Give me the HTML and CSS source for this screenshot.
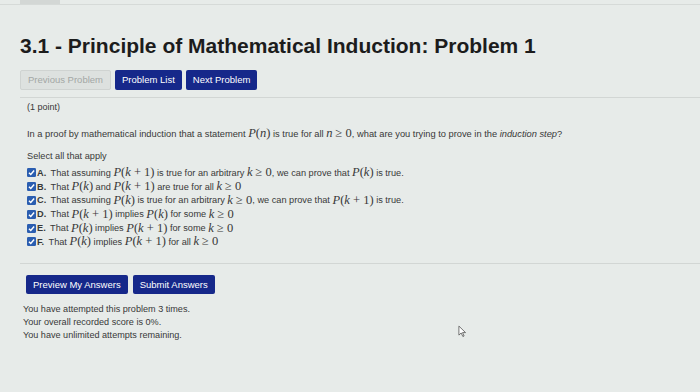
FILE: index.html
```html
<!DOCTYPE html>
<html>
<head>
<meta charset="utf-8">
<link rel="stylesheet" href="styles.css">
</head>
<body>
<div class="topbar"><span class="topbox"></span></div>
<main class="page">
  <h1 class="title">3.1 - Principle of Mathematical Induction: Problem 1</h1>
  <nav class="nav">
    <span class="btn btn-disabled">Previous Problem</span>
    <span class="btn">Problem List</span>
    <span class="btn">Next Problem</span>
  </nav>
  <section class="problem">
    <p class="points">(1 point)</p>
    <p class="question">In a proof by mathematical induction that a statement <span class="m"><i>P</i>(<i>n</i>)</span> is true for all <span class="m"><i>n</i> ≥ 0</span>, what are you trying to prove in the <em>induction step</em>?</p>
    <p class="select">Select all that apply</p>
    <ul class="options">
      <li><span class="cb"><svg viewBox="0 0 10 10"><rect width="10" height="10" rx="1.5" fill="#2a5db0"/><path d="M2.2 5.2 L4.2 7.2 L7.9 2.8" stroke="#fff" stroke-width="1.6" fill="none"/></svg></span><b>A.</b> That assuming <span class="m"><i>P</i>(<i>k</i> + 1)</span> is true for an arbitrary <span class="m"><i>k</i> ≥ 0</span>, we can prove that <span class="m"><i>P</i>(<i>k</i>)</span> is true.</li>
      <li><span class="cb"><svg viewBox="0 0 10 10"><rect width="10" height="10" rx="1.5" fill="#2a5db0"/><path d="M2.2 5.2 L4.2 7.2 L7.9 2.8" stroke="#fff" stroke-width="1.6" fill="none"/></svg></span><b>B.</b> That <span class="m"><i>P</i>(<i>k</i>)</span> and <span class="m"><i>P</i>(<i>k</i> + 1)</span> are true for all <span class="m"><i>k</i> ≥ 0</span></li>
      <li><span class="cb"><svg viewBox="0 0 10 10"><rect width="10" height="10" rx="1.5" fill="#2a5db0"/><path d="M2.2 5.2 L4.2 7.2 L7.9 2.8" stroke="#fff" stroke-width="1.6" fill="none"/></svg></span><b>C.</b> That assuming <span class="m"><i>P</i>(<i>k</i>)</span> is true for an arbitrary <span class="m"><i>k</i> ≥ 0</span>, we can prove that <span class="m"><i>P</i>(<i>k</i> + 1)</span> is true.</li>
      <li><span class="cb"><svg viewBox="0 0 10 10"><rect width="10" height="10" rx="1.5" fill="#2a5db0"/><path d="M2.2 5.2 L4.2 7.2 L7.9 2.8" stroke="#fff" stroke-width="1.6" fill="none"/></svg></span><b>D.</b> That <span class="m"><i>P</i>(<i>k</i> + 1)</span> implies <span class="m"><i>P</i>(<i>k</i>)</span> for some <span class="m"><i>k</i> ≥ 0</span></li>
      <li><span class="cb"><svg viewBox="0 0 10 10"><rect width="10" height="10" rx="1.5" fill="#2a5db0"/><path d="M2.2 5.2 L4.2 7.2 L7.9 2.8" stroke="#fff" stroke-width="1.6" fill="none"/></svg></span><b>E.</b> That <span class="m"><i>P</i>(<i>k</i>)</span> implies <span class="m"><i>P</i>(<i>k</i> + 1)</span> for some <span class="m"><i>k</i> ≥ 0</span></li>
      <li><span class="cb"><svg viewBox="0 0 10 10"><rect width="10" height="10" rx="1.5" fill="#2a5db0"/><path d="M2.2 5.2 L4.2 7.2 L7.9 2.8" stroke="#fff" stroke-width="1.6" fill="none"/></svg></span><b>F.</b> That <span class="m"><i>P</i>(<i>k</i>)</span> implies <span class="m"><i>P</i>(<i>k</i> + 1)</span> for all <span class="m"><i>k</i> ≥ 0</span></li>
    </ul>
  </section>
  <div class="submit-row">
    <span class="btn">Preview My Answers</span>
    <span class="btn">Submit Answers</span>
  </div>
  <div class="status">
    <p>You have attempted this problem 3 times.</p>
    <p>Your overall recorded score is 0%.</p>
    <p>You have unlimited attempts remaining.</p>
  </div>
  <svg class="cursor" viewBox="0 0 10 14" width="9" height="13"><path d="M1 1 L1 11 L3.5 8.6 L5.4 12.6 L6.8 12 L5 8.2 L8.4 8.2 Z" fill="#fff" stroke="#555" stroke-width="0.9"/></svg>
</main>
</body>
</html>
```
FILE: styles.css
```css
html, body {
  margin: 0;
  padding: 0;
}
body {
  width: 700px;
  height: 392px;
  overflow: hidden;
  background: #e7ebe9;
  font-family: "Liberation Sans", Arial, sans-serif;
  color: #383838;
}
.topbar {
  height: 4px;
  border-bottom: 1px solid #d6dad8;
}
.topbox {
  display: block;
  width: 40px;
  height: 4px;
  margin-left: 20px;
  background: #d3d7d5;
}
.page {
  position: relative;
  padding-left: 20px;
  height: 387px;
}
.title {
  margin: 0;
  padding-top: 27px;
  font-size: 21px;
  font-weight: bold;
  color: #1c1c1c;
  line-height: 28px;
}
.nav {
  display: flex;
  gap: 4px;
  margin-top: 10px;
}
.btn {
  display: inline-block;
  background: #16288a;
  color: #fff;
  font-size: 9.5px;
  line-height: 20px;
  padding: 0 7px;
  border-radius: 2px;
}
.nav .btn {
  padding: 0 7px;
}
.btn-disabled {
  background: #dde1df;
  color: #a3a7a5;
  border: 1px solid #cfd3d1;
  line-height: 18px;
}
.problem {
  border-top: 1px solid #d2d6d4;
  margin-top: 7px;
  padding-left: 7px;
  padding-bottom: 14px;
  border-bottom: 1px solid #d2d6d4;
}
.problem p {
  margin: 0;
}
.points {
  font-size: 9px;
  padding-top: 3px;
  line-height: 12px;
}
.question {
  font-size: 9.3px;
  margin-top: 13px !important;
  line-height: 14px;
}
.m {
  font-family: "Liberation Serif", "Times New Roman", serif;
  font-size: 12.5px;
}
.m i {
  font-style: italic;
}
em {
  font-style: italic;
}
.select {
  font-size: 9.2px;
  margin-top: 9px !important;
  line-height: 13px;
}
.options {
  list-style: none;
  margin: 3px 0 0;
  padding: 0;
  font-size: 9.2px;
}
.options li {
  display: flex;
  align-items: center;
  height: 13.8px;
  white-space: pre;
}
.options b {
  margin-right: 2px;
}
.cb {
  display: inline-flex;
  width: 9px;
  height: 9px;
  margin-right: 1px;
}
.cb svg {
  width: 9px;
  height: 9px;
}
.submit-row {
  display: flex;
  gap: 5px;
  padding-left: 6px;
  margin-top: 11px;
}
.submit-row .btn {
  line-height: 19px;
}
.status {
  margin-top: 9px;
  padding-left: 3px;
  font-size: 9.1px;
  line-height: 13px;
}
.status p {
  margin: 0;
}
.cursor {
  position: absolute;
  left: 458px;
  top: 320px;
}
```
